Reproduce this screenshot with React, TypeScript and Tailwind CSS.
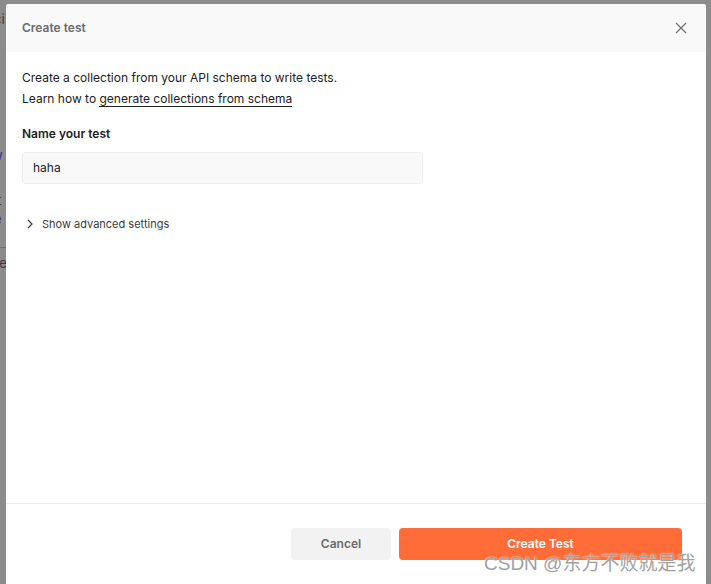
import React from "react";

export default function App() {
  return (
    <div className="relative h-[584px] w-[711px] overflow-hidden bg-[#8c8c8c] font-['Inter','Noto_Sans',sans-serif]">
      {/* dimmed page fragments behind the modal */}
      <div className="absolute left-[-6px] top-[10px] text-[13px] text-[#3a3a3a]">ci</div>
      <div className="absolute left-[-8px] top-[146px] text-[13px] text-[#3b2a8a]">w</div>
      <div className="absolute left-[-3px] top-[191px] text-[13px] text-[#3a3a3a]">t</div>
      <div className="absolute left-[-6px] top-[210px] text-[13px] text-[#3a3a3a]">e</div>
      <div className="absolute left-0 top-[247px] h-px w-[6px] bg-[#6e6e6e]" />
      <div className="absolute left-[-4px] top-[254px] text-[13px] text-[#3a3a3a]">le</div>

      {/* modal */}
      <div className="absolute left-[6px] top-[4px] flex h-[580px] w-[700px] flex-col overflow-hidden rounded-t-[3px] bg-white">
        <div className="flex h-[48px] items-center justify-between bg-[#f9f9f9] pl-[16px] pr-[18px]">
          <span className="text-[12px] font-semibold text-[#6b6b6b]">Create test</span>
          <svg width="14" height="14" viewBox="0 0 14 14" className="text-[#6b6b6b]">
            <path d="M2 2L12 12M12 2L2 12" stroke="currentColor" strokeWidth="1.1" fill="none" />
          </svg>
        </div>

        <div className="flex flex-1 flex-col px-[16px] pt-[15px]">
          <p className="text-[12px] leading-[21px] text-[#212121]">
            Create a collection from your API schema to write tests.
          </p>
          <p className="text-[12px] leading-[21px] text-[#212121]">
            Learn how to{" "}
            <span className="border-b border-[#212121]">generate collections from schema</span>
          </p>

          <div className="mt-[17px] text-[12px] font-semibold leading-[16px] text-[#212121]">Name your test</div>
          <div className="mt-[10px] flex h-[32px] w-[401px] items-center rounded-[4px] border border-[#ededed] bg-[#f9f9f9] px-[10px] text-[12px] text-[#212121]">
            haha
          </div>

          <div className="mt-[32px] flex items-center gap-[8px] pl-[4px] text-[11px] text-[#3b3b3b]">
            <svg width="8" height="10" viewBox="0 0 8 10">
              <path d="M2 1L6 5L2 9" stroke="#3b3b3b" strokeWidth="1.2" fill="none" />
            </svg>
            <span>Show advanced settings</span>
          </div>
        </div>

        <div className="flex justify-end gap-[8px] border-t border-[#ededed] pb-[24px] pl-[16px] pr-[24px] pt-[24px]">
          <button className="h-[32px] w-[100px] rounded-[4px] bg-[#f2f2f2] text-[12px] font-semibold text-[#6b6b6b]">
            Cancel
          </button>
          <button className="h-[32px] w-[283px] rounded-[4px] bg-[#ff6c37] text-[12px] font-semibold text-white">
            Create Test
          </button>
        </div>
      </div>

      {/* watermark */}
      <div className="absolute left-[484px] top-[551px] text-[19px] leading-[26px] text-[#a0a0a0] [text-shadow:0_0_2px_#ffffff] font-['Liberation_Sans','Noto_Sans_CJK_SC',sans-serif]">
        CSDN @东方不败就是我
      </div>
    </div>
  );
}
